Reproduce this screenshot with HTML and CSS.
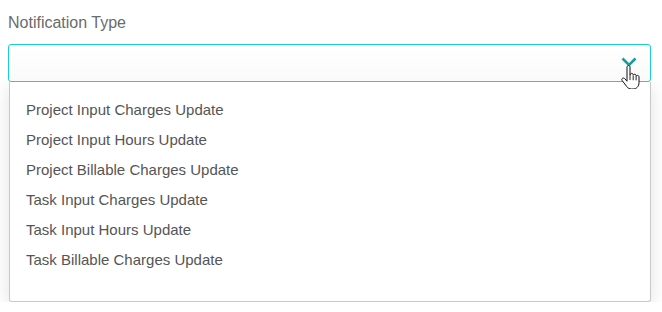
FILE: index.html
```html
<!DOCTYPE html>
<html lang="en">

<head>
    <meta charset="UTF-8">
    <meta name="viewport" content="width=device-width, initial-scale=1.0">
    <title>notification type</title>
    <link rel="stylesheet" href="styles.css">
</head>

<body>
    <div class="field">
        <label class="field_label">Notification Type</label>
        <div class="select_box">
            <span class="chevron">
                <svg width="16" height="10" viewBox="0 0 16 10">
                    <path d="M1.5 1.5 L8 8 L14.5 1.5" fill="none" stroke="#1a9c9c" stroke-width="2.6"/>
                </svg>
            </span>
            <span class="cursor">
                <svg width="20" height="24" viewBox="0 0 20 24">
                    <path d="M6 2.2c0-1 .7-1.7 1.5-1.7S9 1.2 9 2.2V10l.3-.1c0-.9.7-1.5 1.5-1.5s1.4.6 1.4 1.5v.4c.2-.7.8-1.1 1.5-1.1.8 0 1.4.6 1.4 1.5v.7c.2-.6.8-1 1.4-1 .8 0 1.5.7 1.5 1.5v5.8c0 3.6-2.6 6.3-6 6.3h-1.6c-2 0-3.4-.8-4.6-2.4L1.2 15.6c-.6-.8-.5-1.8.3-2.3.7-.5 1.7-.3 2.3.4L6 16.2z" fill="#fff" stroke="#111" stroke-width="1" stroke-linejoin="round"/>
                    <path d="M9 10v5M12.2 10.8v4.4M15.1 11.5v3.8" stroke="#111" stroke-width="0.9"/>
                </svg>
            </span>
        </div>
        <ul class="options">
            <li>Project Input Charges Update</li>
            <li>Project Input Hours Update</li>
            <li>Project Billable Charges Update</li>
            <li>Task Input Charges Update</li>
            <li>Task Input Hours Update</li>
            <li>Task Billable Charges Update</li>
        </ul>
    </div>
</body>

</html>
```

FILE: styles.css
```css
* {
    margin: 0;
    padding: 0;
    box-sizing: border-box;
}

body {
    background: #fff;
    font-family: "Liberation Sans", Arial, sans-serif;
    padding: 14px 11px 0 8px;
}

.field_label {
    display: block;
    font-size: 16px;
    line-height: 18px;
    color: #6b6b6b;
    margin-bottom: 12px;
}

.select_box {
    height: 38px;
    border: 1px solid #19cfcf;
    border-radius: 3px;
    background: linear-gradient(#fff, #fafafa);
    position: relative;
}

.chevron {
    position: absolute;
    right: 13px;
    top: 12px;
    line-height: 0;
}

.cursor {
    position: absolute;
    right: 9px;
    top: 20px;
    line-height: 0;
}

.options {
    list-style: none;
    margin-left: 1px;
    height: 220px;
    border: 1px solid #c8c8c8;
    border-top: none;
    border-radius: 0 0 3px 3px;
    background: #fff;
    box-shadow: 0 5px 18px rgba(0, 0, 0, 0.12);
    padding-top: 13px;
}

.options li {
    font-size: 15px;
    line-height: 30px;
    color: #555;
    padding-left: 16px;
}
```
